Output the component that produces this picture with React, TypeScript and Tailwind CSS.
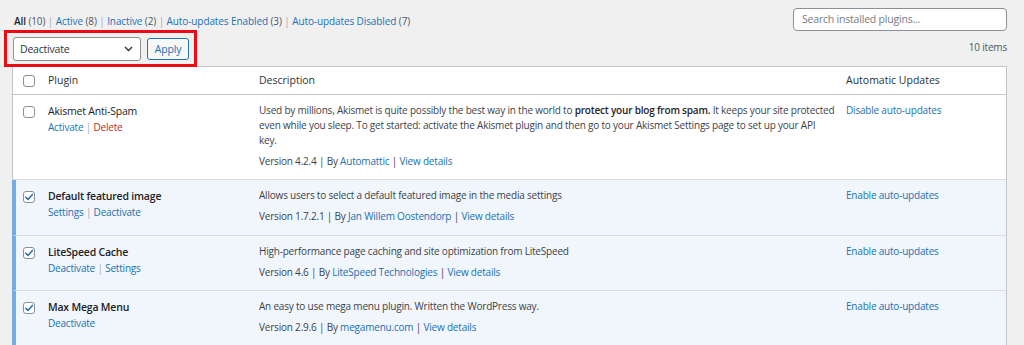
const link = "text-[#2271b1]";

const Checkbox = ({ checked = false }: { checked?: boolean }) => (
  <span className="flex items-center justify-center w-[12px] h-[12px] rounded-[3px] border border-[#8c8f94] bg-white">
    {checked && (
      <svg width="10" height="10" viewBox="0 0 10 10" fill="none">
        <path d="M1.6 5.2 L4 7.4 L8.4 2.4" stroke="#2271b1" strokeWidth="1.5" strokeLinecap="round" strokeLinejoin="round" />
      </svg>
    )}
  </span>
);

const Sep = ({ dark = false }: { dark?: boolean }) => (
  <span className={`whitespace-pre ${dark ? "text-[#3c434a]" : "text-[#a7aaad]"}`}> | </span>
);

type Row = {
  name: string;
  active: boolean;
  actions: { label: string; red?: boolean }[];
  desc: React.ReactNode;
  version: string;
  author: string;
  auto: string;
  height: string;
};

const rows: Row[] = [
  {
    name: "Akismet Anti-Spam",
    active: false,
    actions: [{ label: "Activate" }, { label: "Delete", red: true }],
    desc: (
      <>
        <span className="block whitespace-nowrap">
          Used by millions, Akismet is quite possibly the best way in the world to{" "}
          <strong className="font-semibold text-[#1d2327]">protect your blog from spam.</strong> It keeps your site protected
        </span>
        <span className="block whitespace-nowrap">
          even while you sleep. To get started: activate the Akismet plugin and then go to your Akismet Settings page to set up your API
        </span>
        <span className="block whitespace-nowrap">key.</span>
      </>
    ),
    version: "4.2.4",
    author: "Automattic",
    auto: "Disable auto-updates",
    height: "h-[85px]",
  },
  {
    name: "Default featured image",
    active: true,
    actions: [{ label: "Settings" }, { label: "Deactivate" }],
    desc: "Allows users to select a default featured image in the media settings",
    version: "1.7.2.1",
    author: "Jan Willem Oostendorp",
    auto: "Enable auto-updates",
    height: "h-[56px]",
  },
  {
    name: "LiteSpeed Cache",
    active: true,
    actions: [{ label: "Deactivate" }, { label: "Settings" }],
    desc: "High-performance page caching and site optimization from LiteSpeed",
    version: "4.6",
    author: "LiteSpeed Technologies",
    auto: "Enable auto-updates",
    height: "h-[55px]",
  },
  {
    name: "Max Mega Menu",
    active: true,
    actions: [{ label: "Deactivate" }],
    desc: "An easy to use mega menu plugin. Written the WordPress way.",
    version: "2.9.6",
    author: "megamenu.com",
    auto: "Enable auto-updates",
    height: "h-[60px]",
  },
];

const filters = [
  { label: "Active", count: 8 },
  { label: "Inactive", count: 2 },
  { label: "Auto-updates Enabled", count: 3 },
  { label: "Auto-updates Disabled", count: 7 },
];

const App = () => {
  return (
    <div className="w-[1024px] h-[345px] overflow-hidden bg-[#f0f0f1] font-['Open_Sans','Noto_Sans',sans-serif] text-[10px] tracking-[-0.2px] leading-[15px] text-[#3c434a]">
      <div className="pl-[12px] pr-[17px] pt-[8px]">
        {/* filters + search */}
        <div className="flex justify-between items-start">
          <div className="flex pl-[2px] pt-[6px] whitespace-pre tracking-[-0.1px]">
            <span className="font-semibold text-[#1d2327]">All</span>
            <span className="text-[#50575e]"> (10)</span>
            {filters.map((f) => (
              <span key={f.label} className="flex">
                <Sep />
                <span className={link}>{f.label}</span>
                <span className="text-[#50575e]"> ({f.count})</span>
              </span>
            ))}
          </div>
          <div className="w-[214px] h-[23px] rounded-[4px] border border-[#8c8f94] bg-white pl-[8px] flex items-center text-[#787c82] text-[10.5px]">
            Search installed plugins...
          </div>
        </div>

        {/* bulk actions */}
        <div className="flex justify-between items-start mt-[-1px] mb-[-1px]">
          <div className="relative z-10 ml-[-8px] flex gap-[6px] border-[3px] border-[#ee0a14] pl-[6px] pr-[5px] pt-[4px] pb-[3px]">
            <div className="w-[128px] h-[24px] rounded-[3px] border border-[#8c8f94] bg-white flex items-center justify-between pl-[6px] pr-[7px] text-[#2c3338] text-[10.5px]">
              <span>Deactivate</span>
              <svg width="9" height="6" viewBox="0 0 9 6" fill="none">
                <path d="M1 1 L4.5 4.5 L8 1" stroke="#2c3338" strokeWidth="1.4" />
              </svg>
            </div>
            <div className="mt-[1px] w-[42px] h-[22px] rounded-[3px] border border-[#2271b1] bg-[#f6f7f7] flex items-center justify-center text-[#2271b1] text-[10.5px]">
              Apply
            </div>
          </div>
          <span className="mt-[10px] text-[#50575e]">10 items</span>
        </div>

        {/* table */}
        <div className="border-t border-r border-[#c3c4c7] bg-white">
          <div className="flex items-center h-[28px] border-l border-b border-[#c3c4c7] text-[#2c3338] text-[10.5px] tracking-normal">
            <div className="w-[35px] pl-[10px] pt-[1px]">
              <Checkbox />
            </div>
            <div className="w-[211px]">Plugin</div>
            <div className="w-[587px]">Description</div>
            <div className="flex-1">Automatic Updates</div>
          </div>
          {rows.map((r) => (
            <div
              key={r.name}
              className={`flex items-start pt-[8px] border-b ${r.height} ${
                r.active
                  ? "bg-[#f0f6fc] border-l-4 border-l-[#72aee6] border-b-[#dcdcde]"
                  : "border-l border-l-[#c3c4c7] border-b-[#dcdcde]"
              }`}
            >
              <div className={r.active ? "w-[32px] pl-[7px] pt-[3px]" : "w-[35px] pl-[10px] pt-[3px]"}>
                <Checkbox checked={r.active} />
              </div>
              <div className="w-[211px]">
                <div className={`text-[10.5px] leading-[17px] text-[#1d2327] ${r.active ? "font-semibold" : ""}`}>
                  {r.name}
                </div>
                <div className="flex whitespace-pre">
                  {r.actions.map((a, i) => (
                    <span key={a.label} className="flex">
                      {i > 0 && <Sep />}
                      <span className={a.red ? "text-[#b32d2e]" : link}>{a.label}</span>
                    </span>
                  ))}
                </div>
              </div>
              <div className="w-[587px]">
                <div>{r.desc}</div>
                <div className="mt-[6px] whitespace-pre">
                  Version {r.version}
                  <Sep dark />
                  By <span className={link}>{r.author}</span>
                  <Sep dark />
                  <span className={link}>View details</span>
                </div>
              </div>
              <div className={`flex-1 ${link}`}>{r.auto}</div>
            </div>
          ))}
        </div>
      </div>
    </div>
  );
};

export default App;
